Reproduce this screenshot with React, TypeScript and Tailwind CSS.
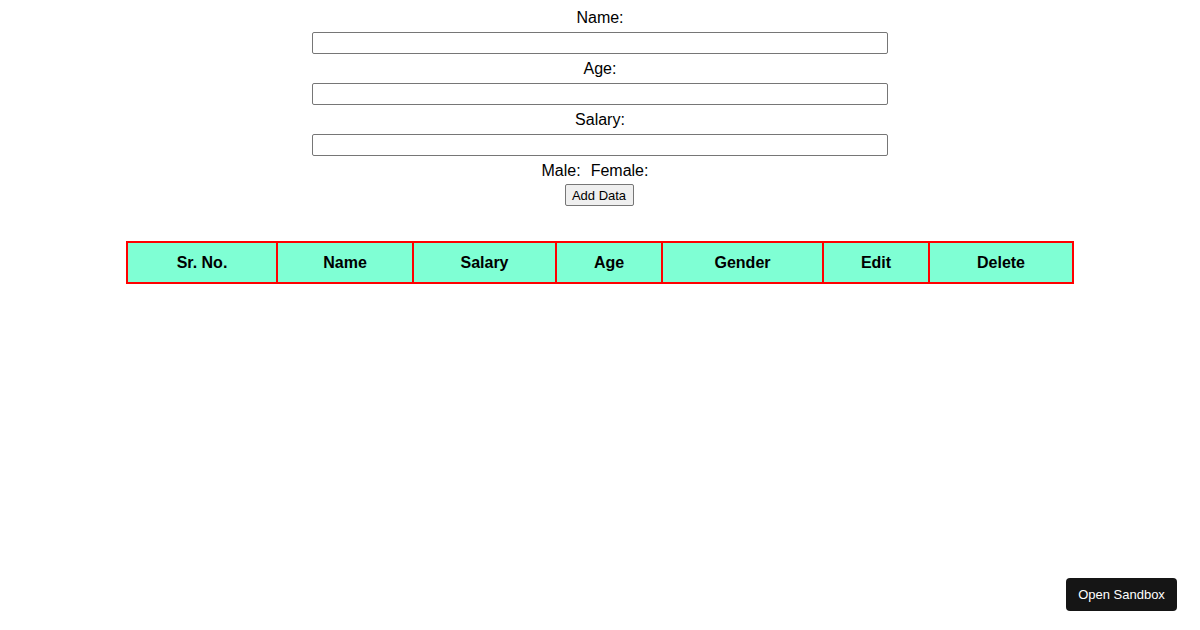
import React from "react";

const cols: [string, string][] = [
  ["Sr. No.", "w-[150px]"],
  ["Name", "w-[136px]"],
  ["Salary", "w-[143px]"],
  ["Age", "w-[106px]"],
  ["Gender", "w-[161px]"],
  ["Edit", "w-[106px]"],
  ["Delete", "w-[144px]"],
];

function Field({ label, first }: { label: string; first?: boolean }) {
  return (
    <div className={`flex flex-col items-center ${first ? "" : "mt-[5px]"}`}>
      <div className="h-[18px] leading-[20px] text-[16px] mb-[6px]">{label}</div>
      <input
        type="text"
        className="w-[576px] h-[22px] border border-[#767676] rounded-[2px] bg-white px-[2px] text-[13px]"
      />
    </div>
  );
}

export default function App() {
  return (
    <div
      className="relative w-[1200px] h-[630px] bg-white text-black"
      style={{ fontFamily: '"Liberation Sans", Arial, sans-serif' }}
    >
      <div className="pt-2 flex flex-col items-center">
        <Field label="Name:" first />
        <Field label="Age:" />
        <Field label="Salary:" />
        <div className="mt-[5px] h-[18px] leading-[20px] text-[16px] pr-[10px] flex gap-[10px]">
          <span>Male:</span>
          <span>Female:</span>
        </div>
        <button className="mt-[5px] mr-[2px] h-[22px] w-[69px] text-[13px] border border-[#767676] rounded-[2px] bg-[#efefef] leading-none">
          Add Data
        </button>
      </div>
      <table className="mt-[35px] mx-auto w-[946px] table-fixed border-collapse">
        <thead>
          <tr>
            {cols.map(([c, w]) => (
              <th
                key={c}
                className={`${w} h-[41px] border-2 border-[#ff0000] bg-[#7fffd4] text-[16px] font-bold p-0`}
              >
                {c}
              </th>
            ))}
          </tr>
        </thead>
      </table>
      <div className="absolute right-[23px] bottom-[19px] w-[111px] h-[33px] rounded-[4px] bg-[#151515] text-white text-[13px] flex items-center justify-center">
        Open Sandbox
      </div>
    </div>
  );
}
